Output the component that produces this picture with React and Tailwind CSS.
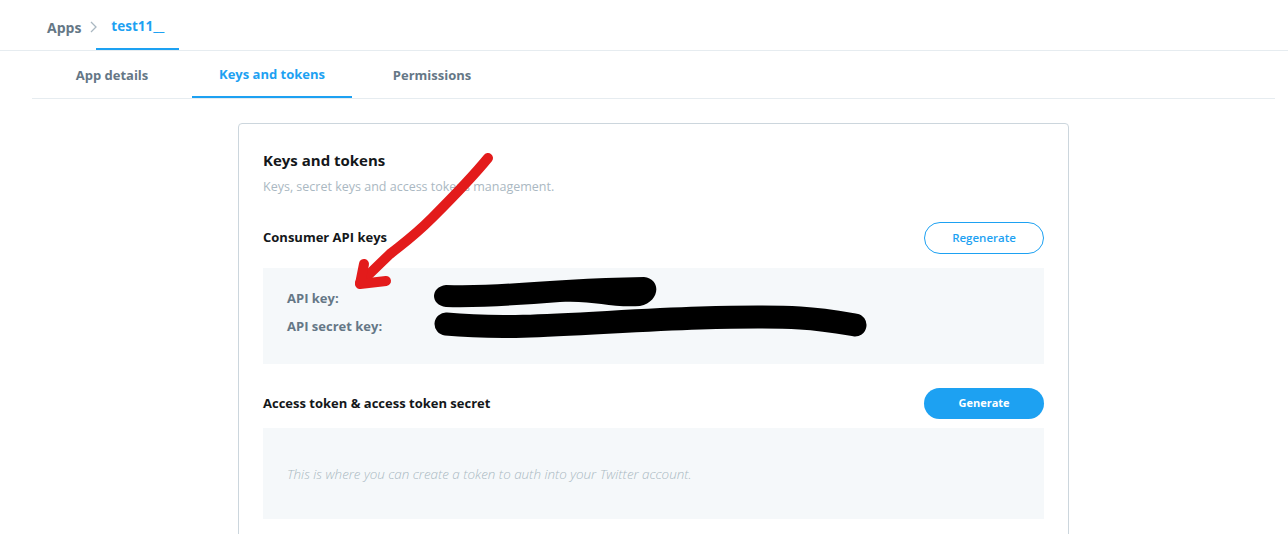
import React from 'react';

const font = { fontFamily: '"Open Sans", "Noto Sans", sans-serif' };

function Tab({ label, active }) {
  return (
    <div
      className={`w-[160px] h-[47px] flex items-center justify-center pt-[3px] text-[13px] font-bold ${
        active ? 'text-[#1da1f2] border-b-2 border-[#1da1f2]' : 'text-[#657786]'
      }`}
    >
      {label}
    </div>
  );
}

function Overlay() {
  return (
    <svg
      className="absolute top-0 left-0 pointer-events-none"
      width="1288"
      height="534"
      viewBox="0 0 1288 534"
    >
      {/* redactions */}
      <path
        fill="#000"
        d="M446 285 C 500 287, 560 278, 644 277 C 662 279, 660 302, 640 306 C 612 308, 592 300, 560 302 C 520 305, 480 308, 446 307 C 430 305, 430 287, 446 285 Z"
      />
      <path
        d="M446 324 C 520 331, 600 321, 700 318 S 820 319, 855 325"
        stroke="#000"
        strokeWidth="23"
        strokeLinecap="round"
        fill="none"
      />
      {/* red arrow */}
      <g stroke="#e31b1b" strokeLinecap="round" strokeLinejoin="round" fill="none" strokeWidth="10">
        <path d="M488 158 C 470 180, 450 200, 432 218 S 405 242, 390 254 L 360 283" />
        <path d="M364 264 L 360 284 L 386 281" />
      </g>
    </svg>
  );
}

export default function App() {
  return (
    <div className="relative w-full h-[534px] overflow-hidden bg-white" style={font}>
      {/* breadcrumb */}
      <div className="h-[51px] border-b border-[#e6ecf0] flex items-stretch pl-[31px]">
        <div className="h-[50px] flex items-center pt-[4px] pl-[16px] pr-[9px] text-[14px] font-bold text-[#657786]">
          Apps
        </div>
        <div className="h-[50px] flex items-center pt-[4px] text-[#aab8c2] -mr-[1px]">
          <svg width="7" height="12" viewBox="0 0 7 12" fill="none" stroke="currentColor" strokeWidth="1.3">
            <path d="M1 1 L6 6 L1 11" />
          </svg>
        </div>
        <div className="h-[50px] flex items-center pt-[4px] px-[15px] text-[13.5px] font-bold text-[#1da1f2] border-b-2 border-[#1da1f2]">
          test11__
        </div>
      </div>

      <div className="ml-[32px] w-[1243px]">
        {/* tabs */}
        <div className="flex border-b border-[#e6ecf0]">
          <Tab label="App details" />
          <Tab label="Keys and tokens" active />
          <Tab label="Permissions" />
        </div>

        {/* card */}
        <div className="mt-6 mx-auto w-[831px] border border-[#ccd6dd] rounded-[4px] px-[24px] pt-[26px] pb-[40px]">
          <h2 className="text-[15px] leading-5 font-bold text-[#14171a]">Keys and tokens</h2>
          <p className="mt-[8px] text-[12.5px] leading-[18px] text-[#aab8c2]">
            Keys, secret keys and access tokens management.
          </p>

          <div className="mt-[26px] flex items-center justify-between">
            <h3 className="text-[13px] font-bold text-[#14171a]">Consumer API keys</h3>
            <button className="w-[120px] h-[32px] rounded-full border border-[#1da1f2] text-[11.5px] font-semibold text-[#1da1f2]">
              Regenerate
            </button>
          </div>

          <div className="mt-[14px] h-[96px] bg-[#f5f8fa] px-[24px] pt-[21px]">
            <div className="flex items-center h-5 text-[13px] font-bold text-[#657786]">API key:</div>
            <div className="mt-[8px] flex items-center h-5 text-[13px] font-bold text-[#657786]">API secret key:</div>
          </div>

          <div className="mt-[24px] flex items-center justify-between">
            <h3 className="text-[13px] font-bold text-[#14171a]">Access token &amp; access token secret</h3>
            <button className="w-[120px] h-[31px] rounded-full bg-[#1da1f2] text-[11px] font-bold text-white">
              Generate
            </button>
          </div>

          <div className="mt-[9px] h-[91px] bg-[#f5f8fa] px-[24px] flex items-center pt-[2px]">
            <p className="text-[13.4px] italic font-light text-[#aab8c2]">
              This is where you can create a token to auth into your Twitter account.
            </p>
          </div>

          <div className="h-[60px]" />
        </div>
      </div>

      <Overlay />
    </div>
  );
}
